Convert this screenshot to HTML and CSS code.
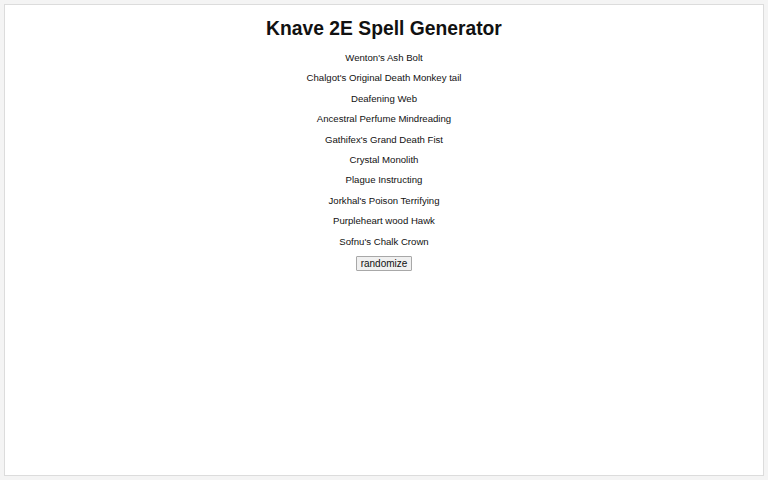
FILE: index.html
```html
<!DOCTYPE html>
<html lang="en">
<head>
    <meta charset="UTF-8">
    <meta name="viewport" content="width=device-width, initial-scale=1.0">
    <title>Knave 2E Spell Generator</title>
    <link rel="stylesheet" href="styles.css">
</head>
<body>
    <div class="page">
        <h1>Knave 2E Spell Generator</h1>
        <div id="spells" class="spells">
            <p>Wenton's Ash Bolt</p>
            <p>Chalgot's Original Death Monkey tail</p>
            <p>Deafening Web</p>
            <p>Ancestral Perfume Mindreading</p>
            <p>Gathifex's Grand Death Fist</p>
            <p>Crystal Monolith</p>
            <p>Plague Instructing</p>
            <p>Jorkhal's Poison Terrifying</p>
            <p>Purpleheart wood Hawk</p>
            <p>Sofnu's Chalk Crown</p>
        </div>
        <button type="button" id="randomize">randomize</button>
    </div>
</body>
</html>
```

FILE: styles.css
```css
body {
    margin: 0;
    padding: 4px;
    background: #f4f4f4;
    font-family: "Liberation Sans", Arial, sans-serif;
    color: #111;
}

.page {
    height: 472px;
    background: white;
    border: 1px solid #dcdcdc;
    display: flex;
    flex-direction: column;
    align-items: center;
    padding-top: 12px;
    box-sizing: border-box;
}

h1 {
    font-size: 19.3px;
    line-height: 24px;
    margin: 0 0 10px;
}

.spells {
    display: flex;
    flex-direction: column;
    align-items: center;
    gap: 7.4px;
}

.spells p {
    font-size: 9.6px;
    line-height: 13px;
    margin: 0;
}

button {
    margin-top: 8px;
    font-family: "Liberation Sans", Arial, sans-serif;
    font-size: 10px;
    padding: 1px 4px;
    background: #f0f0f0;
    border: 1px solid #a8a8a8;
    border-radius: 1px;
    color: #111;
}
```
